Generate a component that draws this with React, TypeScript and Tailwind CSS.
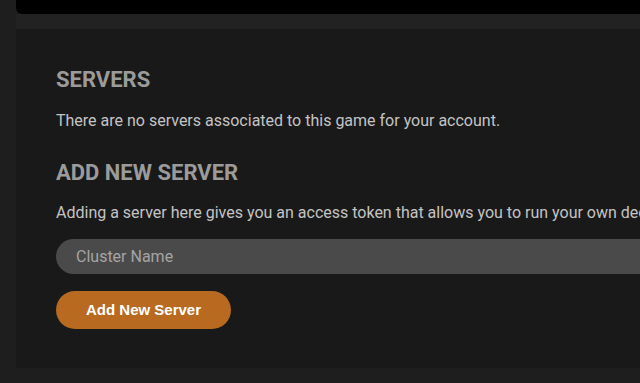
export default function App() {
  return (
    <div className="w-[640px] h-[383px] overflow-hidden bg-[#1e1e1e] pl-4 font-['Roboto',sans-serif]">
      <div className="h-[14px] bg-black rounded-bl-md" />
      <div className="h-[15px] bg-[#222222]" />
      <div className="h-[339px] w-[700px] bg-[#191919] rounded-bl pl-10 pt-[38px]">
        <h2 className="text-[22px] leading-[26px] font-bold text-[#9b9b9b]">SERVERS</h2>
        <p className="mt-[18px] text-[16px] leading-[20px] text-[#c4c4c4]">
          There are no servers associated to this game for your account.
        </p>
        <h2 className="mt-[29px] text-[22px] leading-[26px] font-bold text-[#9b9b9b]">ADD NEW SERVER</h2>
        <p className="mt-[17px] text-[16px] leading-[20px] text-[#c4c4c4] whitespace-nowrap">
          Adding a server here gives you an access token that allows you to run your own dedicated servers.
        </p>
        <input
          placeholder="Cluster Name"
          className="mt-[16px] block w-[640px] h-[35px] rounded-full bg-[#4a4a4a] px-5 text-[16px] text-[#c4c4c4] placeholder:text-[#a4a4a4] outline-none"
        />
        <button className="mt-[17px] h-[38px] w-[175px] rounded-full bg-[#b86a21] text-white text-[15px] font-bold font-['Liberation_Sans',sans-serif]">
          Add New Server
        </button>
      </div>
    </div>
  );
}
